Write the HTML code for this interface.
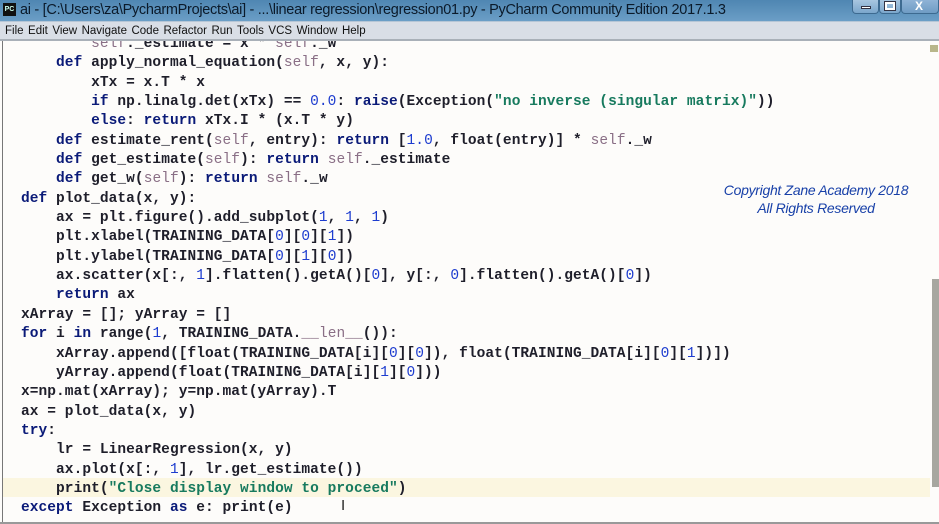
<!DOCTYPE html>
<html><head><meta charset="utf-8"><style>
*{margin:0;padding:0;box-sizing:border-box}
body{width:939px;height:524px;overflow:hidden;background:#fdfcfa;font-family:"Liberation Sans",sans-serif;position:relative}
#title{position:absolute;left:0;top:0;width:939px;height:21px;background:linear-gradient(#4f86b2,#6b9ec6);}
#title .t{position:absolute;left:20px;top:2px;font-size:14.5px;color:#0b1a2a;letter-spacing:-0.3px;white-space:nowrap}
#title .ic{position:absolute;left:3px;top:3px;width:13px;height:13px;background:#111;color:#cfe;font-size:7px;font-weight:bold;line-height:13px;text-align:center}
.wb{position:absolute;top:0;height:14px;border:1px solid #3d6a90;border-top:none;background:linear-gradient(#a8c6e0,#7aa6cc);border-radius:0 0 4px 4px}
#menuwrap{position:absolute;left:0;top:21px;width:939px;height:20px;background:#d9dee6;border-top:1px solid #b6c6d6;border-bottom:2px solid #a9b0b8}
#menu{position:absolute;left:5px;top:3px;font-size:11.5px;color:#111;white-space:nowrap}
#menu span{margin-right:4.5px}
#ed{position:absolute;left:2px;top:41px;width:928px;height:481px;background:#fdfcfa;border-left:1px solid #777;overflow:hidden}
pre{position:absolute;left:18px;top:-6px;font-family:"Liberation Mono",monospace;font-size:14.5px;line-height:19.35px;color:#1e1e2a;font-weight:bold;letter-spacing:0.06px}
.k{color:#0a1a78}.s{color:#8a6f86;font-weight:normal}.n{color:#1d3ccf;font-weight:normal}.g{color:#177a5e}
.hl{position:absolute;left:0;top:437px;width:930px;height:19px;background:#fbf6e0}
#copy{position:absolute;left:712px;top:181px;width:208px;text-align:center;color:#1840a8;font-family:"Liberation Sans",sans-serif;font-style:italic;font-size:14px;line-height:18px;letter-spacing:-0.3px}
#sb{position:absolute;left:932px;top:279px;width:7px;height:208px;background:#a7a7a0}
</style></head><body>
<div id="title"><div class="ic">PC</div><div class="t">ai - [C:\Users\za\PycharmProjects\ai] - ...\linear regression\regression01.py - PyCharm Community Edition 2017.1.3</div>
<div class="wb" style="left:852px;width:27px"><div style="position:absolute;left:8px;top:6px;width:10px;height:3px;background:#fff;border:1px solid #334"></div></div>
<div class="wb" style="left:879px;width:22px"><div style="position:absolute;left:5px;top:2px;width:10px;height:8px;border:2px solid #fff;outline:1px solid #334"></div></div>
<div class="wb" style="left:901px;width:38px;background:linear-gradient(#8fb3d6,#6f9cc4)"><div style="position:absolute;left:13px;top:-1px;color:#fff;font-size:12px;font-weight:bold">X</div></div>
</div>
<div id="menuwrap"><div id="menu"><span>File</span><span>Edit</span><span>View</span><span>Navigate</span><span>Code</span><span>Refactor</span><span>Run</span><span>Tools</span><span>VCS</span><span>Window</span><span>Help</span></div></div>
<div id="ed"><div class="hl"></div>
<pre>        <span class="s">self</span>._estimate = x * <span class="s">self</span>._w
    <span class="k">def</span> apply_normal_equation(<span class="s">self</span>, x, y):
        xTx = x.T * x
        <span class="k">if</span> np.linalg.det(xTx) == <span class="n">0.0</span>: <span class="k">raise</span>(Exception(<span class="g">"no inverse (singular matrix)"</span>))
        <span class="k">else</span>: <span class="k">return</span> xTx.I * (x.T * y)
    <span class="k">def</span> estimate_rent(<span class="s">self</span>, entry): <span class="k">return</span> [<span class="n">1.0</span>, float(entry)] * <span class="s">self</span>._w
    <span class="k">def</span> get_estimate(<span class="s">self</span>): <span class="k">return</span> <span class="s">self</span>._estimate
    <span class="k">def</span> get_w(<span class="s">self</span>): <span class="k">return</span> <span class="s">self</span>._w
<span class="k">def</span> plot_data(x, y):
    ax = plt.figure().add_subplot(<span class="n">1</span>, <span class="n">1</span>, <span class="n">1</span>)
    plt.xlabel(TRAINING_DATA[<span class="n">0</span>][<span class="n">0</span>][<span class="n">1</span>])
    plt.ylabel(TRAINING_DATA[<span class="n">0</span>][<span class="n">1</span>][<span class="n">0</span>])
    ax.scatter(x[:, <span class="n">1</span>].flatten().getA()[<span class="n">0</span>], y[:, <span class="n">0</span>].flatten().getA()[<span class="n">0</span>])
    <span class="k">return</span> ax
xArray = []; yArray = []
<span class="k">for</span> i <span class="k">in</span> range(<span class="n">1</span>, TRAINING_DATA.<span class="s">__len__</span>()):
    xArray.append([float(TRAINING_DATA[i][<span class="n">0</span>][<span class="n">0</span>]), float(TRAINING_DATA[i][<span class="n">0</span>][<span class="n">1</span>])])
    yArray.append(float(TRAINING_DATA[i][<span class="n">1</span>][<span class="n">0</span>]))
x=np.mat(xArray); y=np.mat(yArray).T
ax = plot_data(x, y)
<span class="k">try</span>:
    lr = LinearRegression(x, y)
    ax.plot(x[:, <span class="n">1</span>], lr.get_estimate())
    print(<span class="g">"Close display window to proceed"</span>)
<span class="k">except</span> Exception <span class="k">as</span> e: print(e)</pre>
<div style="position:absolute;left:338px;top:456px;font-size:15px;color:#222">I</div>
</div>
<div style="position:absolute;left:930px;top:45px;width:8px;height:7px;background:#b8b68a"></div>
<div id="sb"></div>
<div id="copy">Copyright Zane Academy 2018<br>All Rights Reserved</div>
<div style="position:absolute;left:0;top:522px;width:939px;height:2px;background:#999"></div>
</body></html>
